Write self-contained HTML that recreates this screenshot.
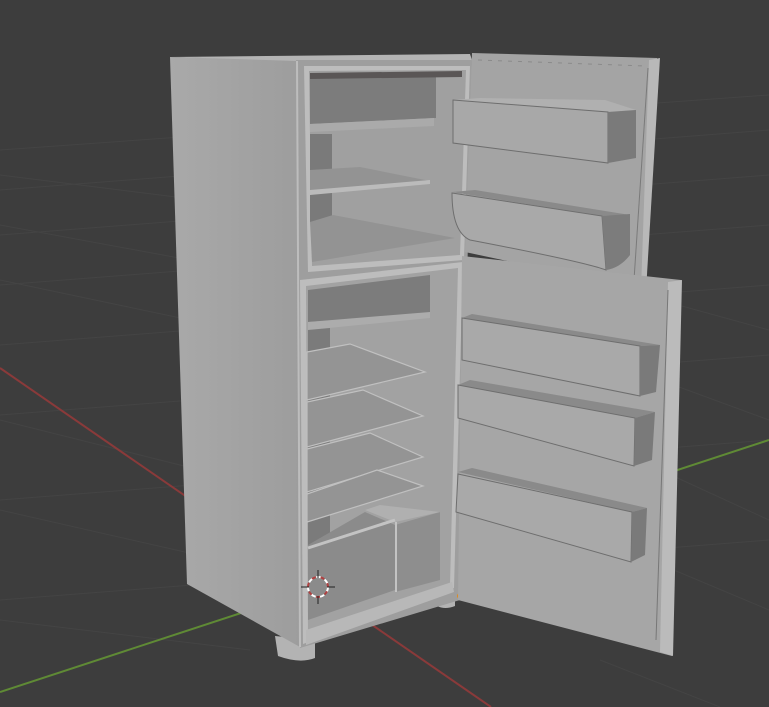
<!DOCTYPE html>
<html><head><meta charset="utf-8"><style>
html,body{margin:0;padding:0;background:#3d3d3d;}
svg{display:block}
</style></head><body>
<svg width="769" height="707" viewBox="0 0 769 707" xmlns="http://www.w3.org/2000/svg">
<defs>
<linearGradient id="side" x1="0" y1="0" x2="1" y2="0">
<stop offset="0" stop-color="#a9a9a9"/><stop offset="1" stop-color="#9d9d9d"/></linearGradient>
</defs>
<rect width="769" height="707" fill="#3d3d3d"/>
<g stroke="#444" stroke-width="1" fill="none">
<path d="M0 150 L769 95 M0 190 L769 130 M0 235 L769 175 M0 285 L769 225 M0 345 L769 285 M0 415 L769 355 M0 500 L769 440 M0 600 L769 540"/>
<path d="M0 175 L200 200 M0 225 L190 260 M0 280 L190 320 M0 420 L200 470 M0 510 L220 560 M0 620 L250 650 M660 300 L769 330 M660 380 L769 420 M660 470 L769 520 M650 560 L769 610 M600 660 L720 707"/>
</g>
<line x1="0" y1="368" x2="491" y2="707" stroke="#8a3a3a" stroke-width="2"/>
<line x1="0" y1="692" x2="769" y2="440" stroke="#5f8a35" stroke-width="2"/>
<!-- feet -->
<path d="M275 636 L315 640 L315 658 Q300 664 278 656 Z" fill="#b3b3b3"/>
<path d="M435 594 L455 592 L455 606 Q445 610 437 606 Z" fill="#b3b3b3"/>
<!-- side panel -->
<polygon points="170,57 297,60 300,647 187,584" fill="url(#side)"/>
<polygon points="170,57 470,54 472,60 297,61" fill="#b4b4b4"/>
<!-- front frame -->
<polygon points="296,60 472,60 460,600 300,648" fill="#9e9e9e"/>
<line x1="297" y1="61" x2="300" y2="647" stroke="#bdbdbd" stroke-width="2"/>
<!-- freezer opening -->
<polygon points="304,66 470,66 464,260 308,272" fill="#bdbdbd"/>
<polygon points="309,71 466,70 460,255 312,266" fill="#a0a0a0"/>
<polygon points="310,76 436,74 436,118 310,124" fill="#7c7c7c"/>
<polygon points="310,73 462,71 462,77 310,79" fill="#5a5656"/>
<polygon points="310,124 434,118 434,126 310,132" fill="#aaaaaa"/>
<polygon points="310,134 332,134 332,220 310,222" fill="#7a7a7a"/>
<polygon points="310,170 360,167 430,181 310,192" fill="#939393"/>
<polygon points="310,190 430,180 430,184 310,195" fill="#bbbbbb"/>
<polygon points="310,222 333,215 455,238 312,262" fill="#939393"/>
<!-- fridge opening -->
<polygon points="300,280 463,262 454,588 303,644" fill="#bdbdbd"/>
<polygon points="306,286 458,268 450,585 308,636" fill="#a2a2a2"/>
<polygon points="308,290 430,275 430,314 308,322" fill="#7c7c7c"/>
<polygon points="308,322 430,312 430,318 308,330" fill="#acacac"/>
<polygon points="308,330 330,328 330,560 308,560" fill="#7b7b7b"/>
<g fill="#949494" stroke="#c0c0c0" stroke-width="1.2">
<polygon points="307,352 350,344 425,372 307,400"/>
<polygon points="307,402 363,390 423,416 307,447"/>
<polygon points="307,449 370,433 423,457 307,492"/>
<polygon points="307,494 377,470 423,486 307,522"/>
</g>
<!-- crisper drawers -->
<polygon points="308,545 365,512 395,525 395,590 308,620" fill="#8b8b8b"/>
<polygon points="395,525 440,512 440,580 395,592" fill="#8e8e8e"/>
<polygon points="365,510 380,505 440,512 395,522" fill="#b0b0b0"/>
<line x1="308" y1="548" x2="395" y2="520" stroke="#c3c3c3" stroke-width="3"/>
<line x1="396" y1="522" x2="396" y2="592" stroke="#c3c3c3" stroke-width="2"/>
<polygon points="306,630 452,582 454,592 306,645" fill="#b8b8b8"/>
<!-- cursor -->
<circle cx="318" cy="587" r="10" fill="none" stroke="#fff" stroke-width="2" stroke-dasharray="5 4"/>
<circle cx="318" cy="587" r="10" fill="none" stroke="#b04040" stroke-width="2" stroke-dasharray="4 5" stroke-dashoffset="4.5"/>
<path d="M318 570v8M318 596v8M301 587h8M327 587h8" stroke="#222" stroke-width="1"/>
<circle cx="460" cy="596" r="3" fill="#e08a1a"/>
<!-- top door -->
<polygon points="472,53 657,58 643,290 465,252" fill="#a4a4a4"/>
<polygon points="649,60 660,58 646,291 641,290" fill="#b8b8b8"/>
<line x1="648" y1="68" x2="634" y2="280" stroke="#7a7a7a" stroke-width="1"/>
<line x1="478" y1="60" x2="645" y2="66" stroke="#8a8a8a" stroke-width="1" stroke-dasharray="4 6"/>
<!-- bin 1 -->
<polygon points="453,100 608,112 636,110 605,100 480,98" fill="#b0b0b0"/>
<polygon points="453,100 608,112 608,163 453,143" fill="#a8a8a8" stroke="#6e6e6e" stroke-width="1"/>
<polygon points="608,112 636,110 636,158 608,163" fill="#7a7a7a"/>
<!-- bin 2 -->
<polygon points="452,192 475,190 630,215 602,216" fill="#8a8a8a"/>
<path d="M452,193 L602,216 L606,270 Q585,262 470,240 Q452,232 452,193 Z" fill="#a9a9a9" stroke="#6e6e6e" stroke-width="1"/>
<path d="M602,216 L630,214 L630,255 Q620,268 606,270 Z" fill="#7c7c7c"/>
<!-- bottom door -->
<polygon points="462,256 681,280 672,656 458,600" fill="#a6a6a6"/>
<polygon points="668,282 682,280 673,656 660,652" fill="#bbbbbb"/>
<line x1="668" y1="290" x2="656" y2="640" stroke="#777" stroke-width="1"/>
<!-- bin A -->
<polygon points="462,318 472,314 660,345 640,346" fill="#8a8a8a"/>
<polygon points="462,318 640,346 640,396 462,360" fill="#a9a9a9" stroke="#6e6e6e" stroke-width="1"/>
<polygon points="640,346 660,345 656,392 640,396" fill="#7a7a7a"/>
<!-- bin B -->
<polygon points="458,385 470,380 655,412 635,418" fill="#8a8a8a"/>
<polygon points="458,385 635,418 634,466 458,418" fill="#a9a9a9" stroke="#6e6e6e" stroke-width="1"/>
<polygon points="635,418 655,412 652,460 634,466" fill="#7a7a7a"/>
<!-- bin C -->
<polygon points="458,472 472,468 647,508 632,512" fill="#8a8a8a"/>
<polygon points="458,474 632,512 631,562 456,512" fill="#a9a9a9" stroke="#6e6e6e" stroke-width="1"/>
<polygon points="632,512 647,508 645,555 631,562" fill="#7a7a7a"/>
</svg>
</body></html>
